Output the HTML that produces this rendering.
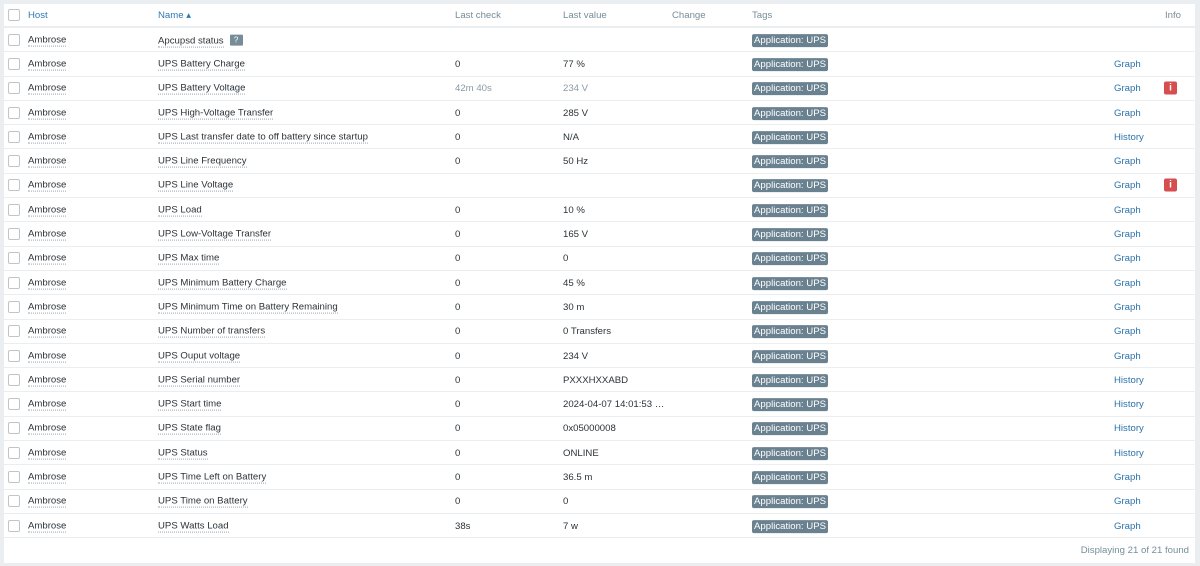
<!DOCTYPE html>
<html><head><meta charset="utf-8"><style>
*{margin:0;padding:0;box-sizing:border-box}
body{width:1200px;height:566px;background:#ebeef0;font-family:"Liberation Sans",Arial,sans-serif;font-size:9.6px;color:#2b3338;position:relative;overflow:hidden}
.panel{position:absolute;left:4px;top:4px;width:1191px;height:559px;background:#fff}
.r{position:absolute;left:0;width:1191px;height:24.3px;border-bottom:1px solid #ebeef0}
.r>*{position:absolute;top:50%;transform:translateY(-45%);white-space:nowrap}
.cb{left:4px;width:12px;height:12px;border:1px solid #bfc5c8;border-radius:2px;background:#fff;transform:translateY(-50%)!important}
.h{left:24px}.n{left:154px}.lc{left:451px}.lv{left:559px}.ch{left:668px}.t{left:748px}.g{left:1110px}.i{left:1160px}
.u{border-bottom:1px dotted #9aa7b0;line-height:11px}
.hd{color:#768d99}
.hd .h,.hd .n{color:#2e7ab3}
.tag{background:#6a8190;color:#fff;padding:1px 2px;border-radius:2px;line-height:11px}
.gr{color:#8a9aa5}
.g{color:#2a73ac}
.info{width:13px;height:13px;background:#d64e4e;border-radius:2px;color:#fff;font-weight:bold;font-size:10px;text-align:center;line-height:13px;transform:translateY(-50%)!important}
.q{display:inline-block;width:13px;height:11px;background:#768d99;color:#fff;font-size:8px;text-align:center;line-height:11px;border-radius:1px;margin-left:6px;vertical-align:1px}
.foot{position:absolute;right:6px;top:541px;color:#768d99}
</style></head><body><div class="panel">
<div class="r hd" style="top:0;height:24px;border-bottom:2px solid #ebeef0"><span class="cb"></span><span class="h">Host</span><span class="n">Name ▴</span><span class="lc">Last check</span><span class="lv">Last value</span><span class="ch">Change</span><span class="t">Tags</span><span class="i" style="left:1161px">Info</span></div>

<div class="r" style="top:24px"><span class="cb"></span><span class="h u">Ambrose</span><span class="n"><span class="u">Apcupsd status</span><span class="q">?</span></span><span class="t tag">Application: UPS</span></div>
<div class="r" style="top:48.3px"><span class="cb"></span><span class="h u">Ambrose</span><span class="n u">UPS Battery Charge</span><span class="lc">0</span><span class="lv">77 %</span><span class="t tag">Application: UPS</span><span class="g">Graph</span></div>
<div class="r" style="top:72.6px"><span class="cb"></span><span class="h u">Ambrose</span><span class="n u">UPS Battery Voltage</span><span class="lc gr">42m 40s</span><span class="lv gr">234 V</span><span class="t tag">Application: UPS</span><span class="g">Graph</span><span class="i info">i</span></div>
<div class="r" style="top:96.9px"><span class="cb"></span><span class="h u">Ambrose</span><span class="n u">UPS High-Voltage Transfer</span><span class="lc">0</span><span class="lv">285 V</span><span class="t tag">Application: UPS</span><span class="g">Graph</span></div>
<div class="r" style="top:121.2px"><span class="cb"></span><span class="h u">Ambrose</span><span class="n u">UPS Last transfer date to off battery since startup</span><span class="lc">0</span><span class="lv">N/A</span><span class="t tag">Application: UPS</span><span class="g">History</span></div>
<div class="r" style="top:145.5px"><span class="cb"></span><span class="h u">Ambrose</span><span class="n u">UPS Line Frequency</span><span class="lc">0</span><span class="lv">50 Hz</span><span class="t tag">Application: UPS</span><span class="g">Graph</span></div>
<div class="r" style="top:169.8px"><span class="cb"></span><span class="h u">Ambrose</span><span class="n u">UPS Line Voltage</span><span class="t tag">Application: UPS</span><span class="g">Graph</span><span class="i info">i</span></div>
<div class="r" style="top:194.1px"><span class="cb"></span><span class="h u">Ambrose</span><span class="n u">UPS Load</span><span class="lc">0</span><span class="lv">10 %</span><span class="t tag">Application: UPS</span><span class="g">Graph</span></div>
<div class="r" style="top:218.4px"><span class="cb"></span><span class="h u">Ambrose</span><span class="n u">UPS Low-Voltage Transfer</span><span class="lc">0</span><span class="lv">165 V</span><span class="t tag">Application: UPS</span><span class="g">Graph</span></div>
<div class="r" style="top:242.7px"><span class="cb"></span><span class="h u">Ambrose</span><span class="n u">UPS Max time</span><span class="lc">0</span><span class="lv">0</span><span class="t tag">Application: UPS</span><span class="g">Graph</span></div>
<div class="r" style="top:267px"><span class="cb"></span><span class="h u">Ambrose</span><span class="n u">UPS Minimum Battery Charge</span><span class="lc">0</span><span class="lv">45 %</span><span class="t tag">Application: UPS</span><span class="g">Graph</span></div>
<div class="r" style="top:291.3px"><span class="cb"></span><span class="h u">Ambrose</span><span class="n u">UPS Minimum Time on Battery Remaining</span><span class="lc">0</span><span class="lv">30 m</span><span class="t tag">Application: UPS</span><span class="g">Graph</span></div>
<div class="r" style="top:315.6px"><span class="cb"></span><span class="h u">Ambrose</span><span class="n u">UPS Number of transfers</span><span class="lc">0</span><span class="lv">0 Transfers</span><span class="t tag">Application: UPS</span><span class="g">Graph</span></div>
<div class="r" style="top:339.9px"><span class="cb"></span><span class="h u">Ambrose</span><span class="n u">UPS Ouput voltage</span><span class="lc">0</span><span class="lv">234 V</span><span class="t tag">Application: UPS</span><span class="g">Graph</span></div>
<div class="r" style="top:364.2px"><span class="cb"></span><span class="h u">Ambrose</span><span class="n u">UPS Serial number</span><span class="lc">0</span><span class="lv">PXXXHXXABD</span><span class="t tag">Application: UPS</span><span class="g">History</span></div>
<div class="r" style="top:388.5px"><span class="cb"></span><span class="h u">Ambrose</span><span class="n u">UPS Start time</span><span class="lc">0</span><span class="lv">2024-04-07 14:01:53 …</span><span class="t tag">Application: UPS</span><span class="g">History</span></div>
<div class="r" style="top:412.8px"><span class="cb"></span><span class="h u">Ambrose</span><span class="n u">UPS State flag</span><span class="lc">0</span><span class="lv">0x05000008</span><span class="t tag">Application: UPS</span><span class="g">History</span></div>
<div class="r" style="top:437.1px"><span class="cb"></span><span class="h u">Ambrose</span><span class="n u">UPS Status</span><span class="lc">0</span><span class="lv">ONLINE</span><span class="t tag">Application: UPS</span><span class="g">History</span></div>
<div class="r" style="top:461.4px"><span class="cb"></span><span class="h u">Ambrose</span><span class="n u">UPS Time Left on Battery</span><span class="lc">0</span><span class="lv">36.5 m</span><span class="t tag">Application: UPS</span><span class="g">Graph</span></div>
<div class="r" style="top:485.7px"><span class="cb"></span><span class="h u">Ambrose</span><span class="n u">UPS Time on Battery</span><span class="lc">0</span><span class="lv">0</span><span class="t tag">Application: UPS</span><span class="g">Graph</span></div>
<div class="r" style="top:510px"><span class="cb"></span><span class="h u">Ambrose</span><span class="n u">UPS Watts Load</span><span class="lc">38s</span><span class="lv">7 w</span><span class="t tag">Application: UPS</span><span class="g">Graph</span></div>
<div class="foot">Displaying 21 of 21 found</div>
</div></body></html>
